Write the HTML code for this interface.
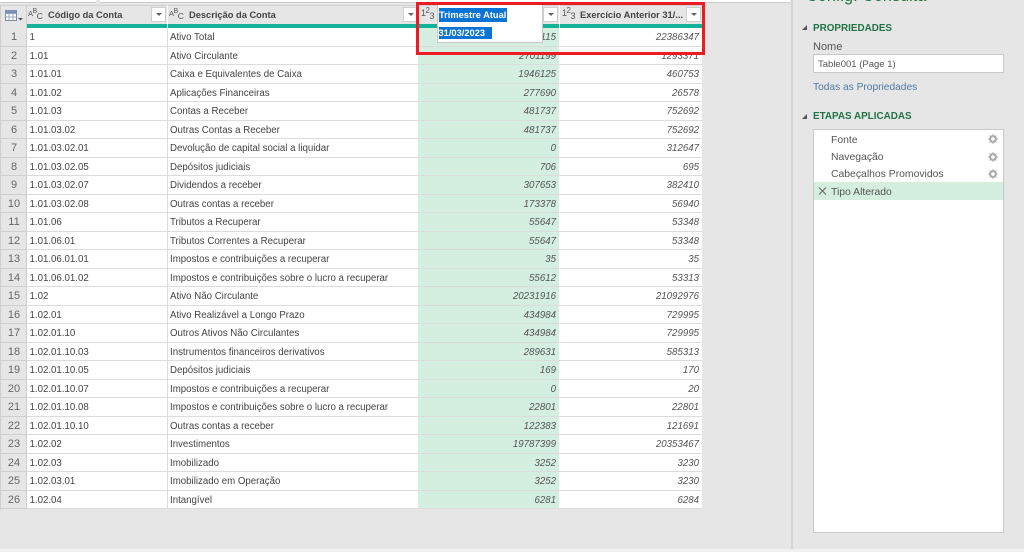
<!DOCTYPE html>
<html lang="pt"><head><meta charset="utf-8"><title>Power Query</title>
<style>
html,body{margin:0;padding:0}
body{width:1024px;height:552px;overflow:hidden;position:relative;background:#e6e6e6;font-family:"Liberation Sans",sans-serif;font-size:9.7px;color:#444}
#w{position:absolute;left:0;top:0;width:1024px;height:552px;filter:blur(.35px)}
.a{position:absolute}
.r{position:absolute;left:0;width:702px;height:18.5px;line-height:20.5px}
.r i,.r b,.r u,.r s,.r em{position:absolute;top:0;height:17.5px;border-bottom:1px solid #dcdcdc;font-style:normal;font-weight:normal;text-decoration:none;white-space:nowrap;box-sizing:content-box;overflow:hidden}
.r i{left:1px;width:26px;background:#e6e6e6;text-align:center;color:#666;font-size:11px;border-bottom:1px solid #cfcfcf;box-shadow:inset -1px 0 #cfcfcf;line-height:19.5px}
.r b{left:27px;width:137.5px;padding-left:2.5px;background:#fff;border-right:1px solid #dcdcdc}
.r u{left:168px;width:248px;padding-left:2px;background:#fff;border-right:1px solid #dcdcdc}
.r s{left:418px;width:138px;padding-right:3px;background:#d4eee0;text-align:right;font-style:italic;color:#555;font-size:9.7px}
.r em{left:559px;width:140px;padding-right:3px;background:#fff;text-align:right;font-style:italic;color:#555;font-size:9.7px}
.h{position:absolute;top:5px;height:19px;line-height:21.5px;font-weight:bold;color:#444;font-size:9.3px;white-space:nowrap}
.dd{position:absolute;top:7px;width:13px;height:13px;background:#fff;border:1px solid #cfcfcf}
.dd:after{content:"";position:absolute;left:3.5px;top:5px;border:3px solid transparent;border-top:3px solid #666;border-bottom:0}
.ty{position:absolute;top:8px;color:#555;font-size:7.5px;white-space:nowrap;font-weight:normal;letter-spacing:-.5px}
.ty sup{font-size:7px;position:relative;top:-3px;vertical-align:baseline}
.ty sub{font-size:8.5px;position:relative;top:2.5px;vertical-align:baseline}
.sel{position:absolute;left:439px;background:#0a73d6;color:#fff;font-weight:bold;font-size:9.3px;white-space:nowrap}
.g{color:#217346;font-weight:bold;font-size:9.9px;position:absolute;left:813px;white-space:nowrap}
.tri{position:absolute;left:802px;width:0;height:0;border-left:5px solid transparent;border-bottom:5px solid #555}
.st{position:absolute;left:831px;font-size:10.4px;color:#555;white-space:nowrap}
.gear{position:absolute;left:988px;width:10px;height:10px}
</style></head><body><div id="w">
<div class="a" style="left:0;top:0;width:96px;height:2px;background:#fff;border-bottom:1px solid #ccc"></div>
<div class="a" style="left:100px;top:0;width:690px;height:2px;background:#fff;border-bottom:1px solid #ccc"></div>
<div class="a" style="left:0;top:5px;width:702px;height:19px;background:#e6e6e6;border-top:1px solid #d0d0d0"></div>
<div class="a" style="left:1px;top:24px;width:26px;height:4px;background:#e6e6e6"></div>
<div class="a" style="left:27px;top:24px;width:675px;height:4px;background:#13b39a"></div>
<div class="a" style="left:0;top:5px;width:1px;height:505px;background:#cfcfcf"></div>
<div class="a" style="left:26px;top:5px;width:1px;height:23px;background:#cfcfcf"></div>
<div class="a" style="left:167px;top:5px;width:1px;height:23px;background:#fff"></div>
<div class="a" style="left:418px;top:5px;width:1px;height:23px;background:#fff"></div>
<div class="a" style="left:559px;top:5px;width:1px;height:23px;background:#fff"></div>
<svg class="a" style="left:5px;top:10px" width="20" height="13" viewBox="0 0 20 13"><rect x=".5" y=".5" width="11" height="10" fill="#fff" stroke="#7a8aa8"/><path d="M.5 3.5h11M.5 7h11M4 .5v10M8 .5v10" stroke="#9aa8c0" fill="none"/><path d="M.5 .5h11v3h-11z" fill="#7f93b8"/><path d="M13 8h5l-2.5 2.5z" fill="#555"/></svg>
<div class="ty" style="left:28px">A<sup>B</sup><sub>C</sub></div>
<div class="h" style="left:48px">Código da Conta</div><div class="dd" style="left:151px"></div>
<div class="ty" style="left:169px">A<sup>B</sup><sub>C</sub></div>
<div class="h" style="left:189px">Descrição da Conta</div><div class="dd" style="left:403px"></div>
<div class="ty" style="left:421px;font-size:9px">1<sup style="font-size:8px">2</sup><sub style="font-size:9px">3</sub></div>
<div class="ty" style="left:562px;font-size:9px">1<sup style="font-size:8px">2</sup><sub style="font-size:9px">3</sub></div>
<div class="h" style="left:580px">Exercício Anterior 31/...</div><div class="dd" style="left:686px"></div>
<div class="dd" style="left:543px"></div>

<div class="r" style="top:28px"><i>1</i><b>1</b><u>Ativo Total</u><s>21819115</s><em>22386347</em></div>
<div class="r" style="top:46.5px"><i>2</i><b>1.01</b><u>Ativo Circulante</u><s>2701199</s><em>1293371</em></div>
<div class="r" style="top:65px"><i>3</i><b>1.01.01</b><u>Caixa e Equivalentes de Caixa</u><s>1946125</s><em>460753</em></div>
<div class="r" style="top:83.5px"><i>4</i><b>1.01.02</b><u>Aplicações Financeiras</u><s>277690</s><em>26578</em></div>
<div class="r" style="top:102px"><i>5</i><b>1.01.03</b><u>Contas a Receber</u><s>481737</s><em>752692</em></div>
<div class="r" style="top:120.5px"><i>6</i><b>1.01.03.02</b><u>Outras Contas a Receber</u><s>481737</s><em>752692</em></div>
<div class="r" style="top:139px"><i>7</i><b>1.01.03.02.01</b><u>Devolução de capital social a liquidar</u><s>0</s><em>312647</em></div>
<div class="r" style="top:157.5px"><i>8</i><b>1.01.03.02.05</b><u>Depósitos judiciais</u><s>706</s><em>695</em></div>
<div class="r" style="top:176px"><i>9</i><b>1.01.03.02.07</b><u>Dividendos a receber</u><s>307653</s><em>382410</em></div>
<div class="r" style="top:194.5px"><i>10</i><b>1.01.03.02.08</b><u>Outras contas a receber</u><s>173378</s><em>56940</em></div>
<div class="r" style="top:213px"><i>11</i><b>1.01.06</b><u>Tributos a Recuperar</u><s>55647</s><em>53348</em></div>
<div class="r" style="top:231.5px"><i>12</i><b>1.01.06.01</b><u>Tributos Correntes a Recuperar</u><s>55647</s><em>53348</em></div>
<div class="r" style="top:250px"><i>13</i><b>1.01.06.01.01</b><u>Impostos e contribuições a recuperar</u><s>35</s><em>35</em></div>
<div class="r" style="top:268.5px"><i>14</i><b>1.01.06.01.02</b><u>Impostos e contribuições sobre o lucro a recuperar</u><s>55612</s><em>53313</em></div>
<div class="r" style="top:287px"><i>15</i><b>1.02</b><u>Ativo Não Circulante</u><s>20231916</s><em>21092976</em></div>
<div class="r" style="top:305.5px"><i>16</i><b>1.02.01</b><u>Ativo Realizável a Longo Prazo</u><s>434984</s><em>729995</em></div>
<div class="r" style="top:324px"><i>17</i><b>1.02.01.10</b><u>Outros Ativos Não Circulantes</u><s>434984</s><em>729995</em></div>
<div class="r" style="top:342.5px"><i>18</i><b>1.02.01.10.03</b><u>Instrumentos financeiros derivativos</u><s>289631</s><em>585313</em></div>
<div class="r" style="top:361px"><i>19</i><b>1.02.01.10.05</b><u>Depósitos judiciais</u><s>169</s><em>170</em></div>
<div class="r" style="top:379.5px"><i>20</i><b>1.02.01.10.07</b><u>Impostos e contribuições a recuperar</u><s>0</s><em>20</em></div>
<div class="r" style="top:398px"><i>21</i><b>1.02.01.10.08</b><u>Impostos e contribuições sobre o lucro a recuperar</u><s>22801</s><em>22801</em></div>
<div class="r" style="top:416.5px"><i>22</i><b>1.02.01.10.10</b><u>Outras contas a receber</u><s>122383</s><em>121691</em></div>
<div class="r" style="top:435px"><i>23</i><b>1.02.02</b><u>Investimentos</u><s>19787399</s><em>20353467</em></div>
<div class="r" style="top:453.5px"><i>24</i><b>1.02.03</b><u>Imobilizado</u><s>3252</s><em>3230</em></div>
<div class="r" style="top:472px"><i>25</i><b>1.02.03.01</b><u>Imobilizado em Operação</u><s>3252</s><em>3230</em></div>
<div class="r" style="top:490.5px"><i>26</i><b>1.02.04</b><u>Intangível</u><s>6281</s><em>6284</em></div>

<div class="a" style="left:437px;top:5px;width:104px;height:37px;background:#fff;border:1px solid #c8c8c8;border-top:0"></div>
<div class="sel" style="top:8px;height:14px;line-height:15px;width:68px;overflow:hidden">Trimestre Atual</div>
<div class="sel" style="top:27px;height:12px;line-height:13px;width:53px;left:438.5px;overflow:hidden">31/03/2023</div>

<div class="a" style="left:416px;top:2px;width:289px;height:52.5px;border:3px solid #ed1c24;border-right-width:3.5px;box-sizing:border-box"></div>

<div class="a" style="left:791px;top:0;width:2px;height:549px;background:#d4d4d4"></div>
<div class="a" style="left:0;top:549px;width:1024px;height:3px;background:#f0f0f0"></div>
<div class="a" style="left:806px;top:-13.5px;font-size:16.3px;color:#217346;white-space:nowrap">Config. Consulta</div>

<div class="tri" style="top:25px"></div>
<div class="g" style="top:22.5px">PROPRIEDADES</div>
<div class="a" style="left:813px;top:41px;font-size:11px;color:#555">Nome</div>
<div class="a" style="left:813px;top:54px;width:191px;height:19px;background:#fff;border:1px solid #c8c8c8;box-sizing:border-box;padding-left:4px;line-height:19px;font-size:9.5px;color:#555;white-space:nowrap">Table001 (Page 1)</div>
<div class="a" style="left:813px;top:82px;font-size:10.2px;color:#4f7aa8;white-space:nowrap">Todas as Propriedades</div>
<div class="tri" style="top:114px"></div>
<div class="g" style="top:111px">ETAPAS APLICADAS</div>
<div class="a" style="left:813px;top:129px;width:191px;height:404px;background:#fff;border:1px solid #c8c8c8;box-sizing:border-box"></div>
<div class="a" style="left:814px;top:182px;width:189px;height:18px;background:#d4eee0"></div>
<div class="st" style="top:134.5px">Fonte</div>
<div class="st" style="top:152px">Navegação</div>
<div class="st" style="top:169px">Cabeçalhos Promovidos</div>
<div class="st" style="top:186.5px">Tipo Alterado</div>
<svg class="a" style="left:818px;top:187px" width="9" height="8" viewBox="0 0 9 8"><path d="M1 .5l7 7M8 .5l-7 7" stroke="#666" fill="none"/></svg>
<svg class="gear" style="top:134px" viewBox="0 0 9 9"><circle cx="4.5" cy="4.5" r="2.7" fill="none" stroke="#aaa" stroke-width="1.6"/><path d="M4.5 0v9M0 4.5h9M1.3 1.3l6.400 6.400M7.700 1.300l-6.400 6.400" stroke="#aaa" stroke-width=".8"/><circle cx="4.5" cy="4.5" r="1.5" fill="#fff"/></svg>
<svg class="gear" style="top:151.5px" viewBox="0 0 9 9"><circle cx="4.5" cy="4.5" r="2.7" fill="none" stroke="#aaa" stroke-width="1.6"/><path d="M4.5 0v9M0 4.5h9M1.3 1.3l6.400 6.400M7.700 1.300l-6.400 6.400" stroke="#aaa" stroke-width=".8"/><circle cx="4.5" cy="4.5" r="1.5" fill="#fff"/></svg>
<svg class="gear" style="top:169px" viewBox="0 0 9 9"><circle cx="4.5" cy="4.5" r="2.7" fill="none" stroke="#aaa" stroke-width="1.6"/><path d="M4.5 0v9M0 4.5h9M1.3 1.3l6.400 6.400M7.700 1.300l-6.400 6.400" stroke="#aaa" stroke-width=".8"/><circle cx="4.5" cy="4.5" r="1.5" fill="#fff"/></svg>
</div></body></html>
